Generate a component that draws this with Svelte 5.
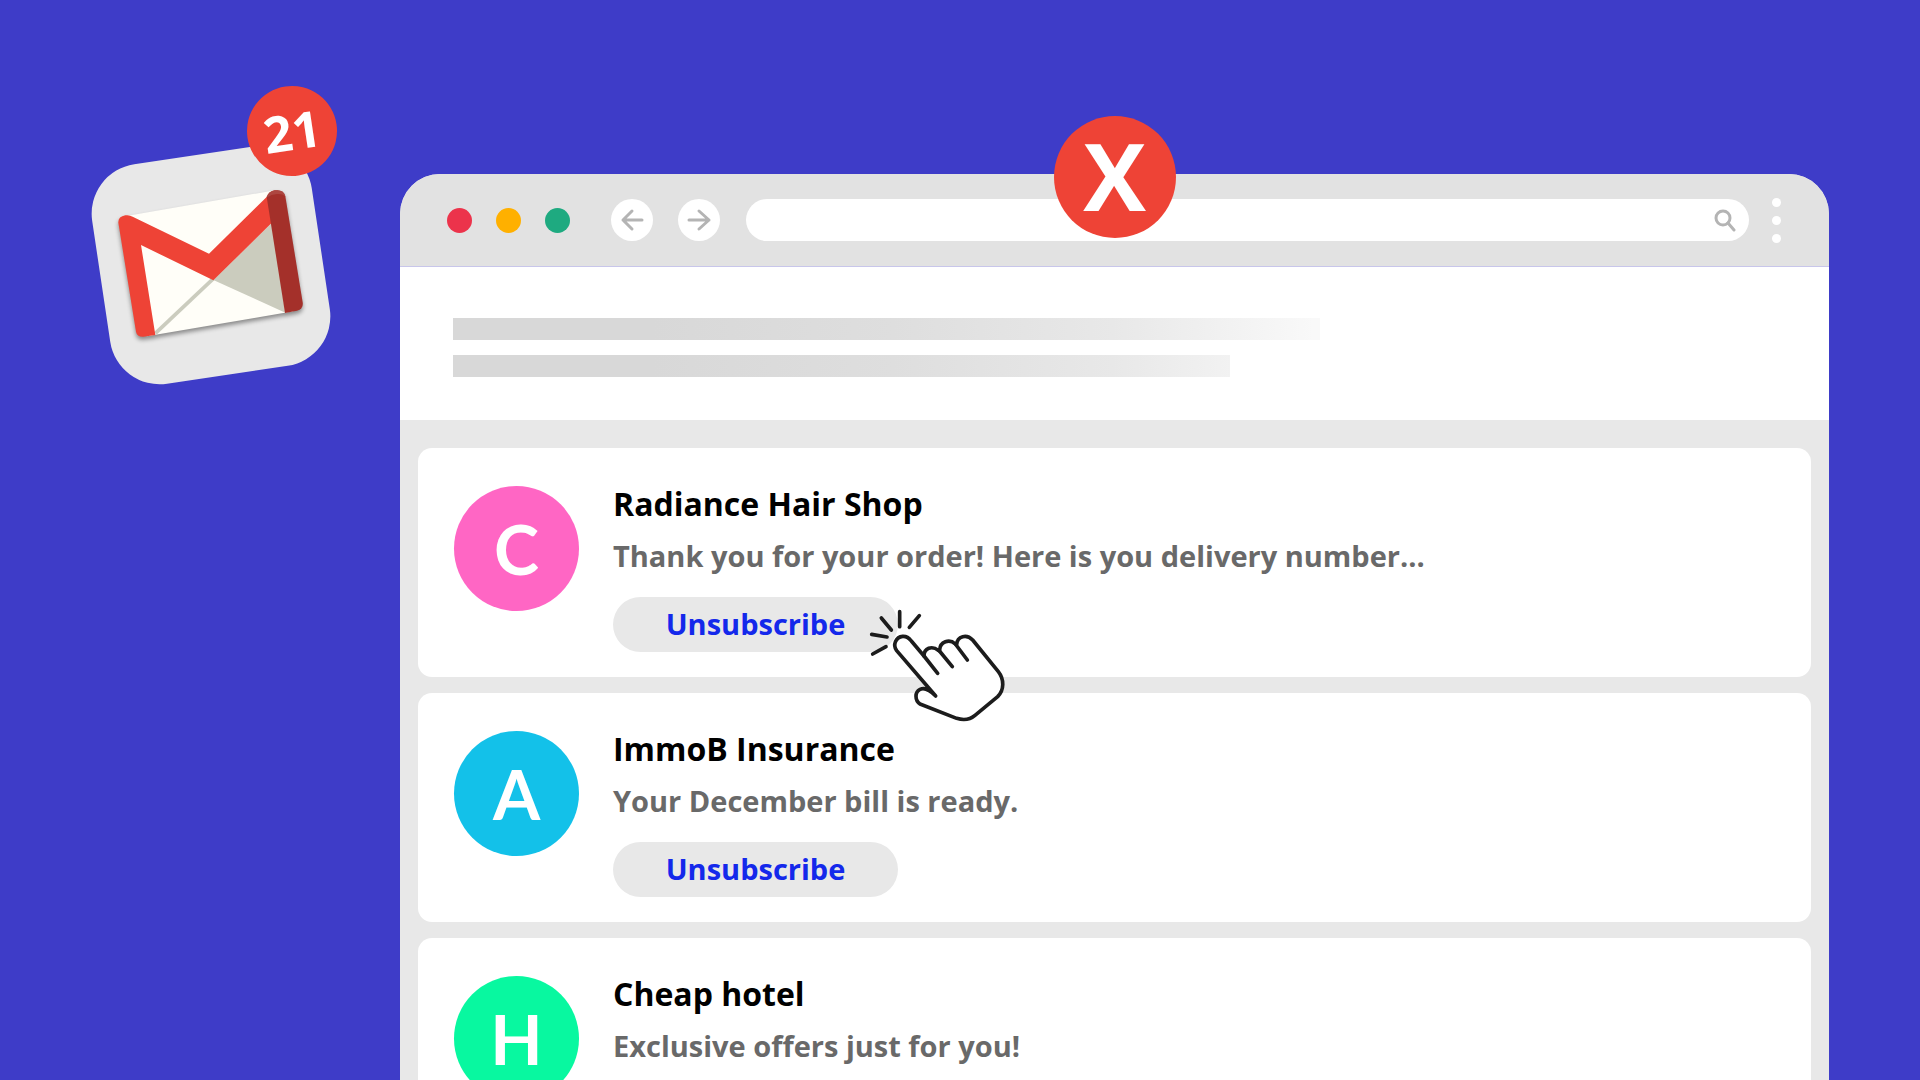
<script lang="ts">
    type Mail = { letter: string; color: string; sender: string; subject: string; newsletter: boolean };

    const mails: Mail[] = [
        { letter: "C", color: "#ff66c4", sender: "Radiance Hair Shop", subject: "Thank you for your order! Here is you delivery number...", newsletter: true },
        { letter: "A", color: "#13c1e9", sender: "ImmoB Insurance", subject: "Your December bill is ready.", newsletter: true },
        { letter: "H", color: "#08f8a0", sender: "Cheap hotel", subject: "Exclusive offers just for you!", newsletter: false },
    ];
    const lines = [65.5, 58.7];
    let unread = 21;
    let address = "";
</script>

<main class="desktop">
    <a class="app" href="#mail" aria-label="Mail">
        <span class="tile"></span>
        <svg class="envelope" viewBox="0 0 840 990" aria-hidden="true">
            <path fill="#fffef8" d="M140 438 L590 360 L640 724 L200 799 Z" />
            <path fill="#cbccbe" d="M400 630 L576 458 L616 728 Z" />
            <path stroke="#cbccbe" stroke-width="11" d="M400 626 L226 790" />
            <path fill="#ee4336" d="M115 458 Q114 440 136 436 Q148 434 158 440 L387 551 L566 375 L574 460 L400 631 L183 525 L226 795 L190 800 Q171 801 168 785 Z" />
            <path fill="#a4302a" d="M560 380 Q568 364 584 361 Q611 357 616 379 L668 697 Q671 717 651 722 L615 729 Z" />
            <path fill="#ad4640" d="M562 377 Q568 364 584 361 Q611 357 616 379 Q606 370 590 372 Q574 373 562 382 Z" />
        </svg>
        <span class="count">{unread}</span>
    </a>

    <section class="window">
        <button class="close" aria-label="Close">X</button>

        <header class="toolbar">
            <div class="lights">
                <span class="red"></span>
                <span class="yellow"></span>
                <span class="green"></span>
            </div>
            <nav>
                <button aria-label="Back">
                    <svg viewBox="0 0 42 42"><path d="M31 21 H12 M21 12 L12 21 L21 30" /></svg>
                </button>
                <button aria-label="Forward">
                    <svg viewBox="0 0 42 42"><path d="M11 21 H31 M21 12 L31 21 L21 30" /></svg>
                </button>
            </nav>
            <label class="address">
                <input type="text" aria-label="Address" bind:value={address} />
                <svg viewBox="0 0 24 24"><circle cx="10" cy="10" r="7" /><path d="M15 15 L21 22" /></svg>
            </label>
            <button class="more" aria-label="More">
                <i></i><i></i><i></i>
            </button>
        </header>

        <div class="intro">
            {#each lines as width}
                <div class="line" style="width: {width}%"></div>
            {/each}
        </div>

        <div class="list">
            {#each mails as mail, i}
                <article class="card">
                    <div class="avatar" style="background-color: {mail.color}">{mail.letter}</div>
                    <div class="body">
                        <h2>{mail.sender}</h2>
                        <p>{mail.subject}</p>
                        {#if mail.newsletter}
                            <div class="action">
                                <button class="unsubscribe">Unsubscribe</button>
                                {#if i === 0}
                                    <svg class="pointer" viewBox="0 0 570 450" aria-hidden="true">
                                        <path class="hand" d="M287 318 L170 182 C157 164 168 141 188 139 C201 138 208 145 214 153 L252 198 C252 175 275 165 296 182 L299 180 C300 155 328 145 346 162 L350 163 C352 138 380 131 398 150 L475 245 C493 268 493 300 473 320 L405 376 C390 389 370 391 350 385 L240 342 C224 331 224 306 240 298 C255 292 268 299 287 318 Z" />
                                        <path d="M252 198 L293 250 M296 180 L337 230 M346 162 L382 210" />
                                        <path d="M179 65 V110 M124 84 L154 120 M238 77 L208 112 M95 133 L141 141 M98 192 L138 170" />
                                    </svg>
                                {/if}
                            </div>
                        {/if}
                    </div>
                </article>
            {/each}
        </div>
    </section>
</main>

<style>
    :global(body) {
        background: #3e3cc8;
    }
    .desktop {
        position: relative;
        box-sizing: border-box;
        height: 100vh;
        padding: 174px 91px 0 400px;
        overflow: hidden;
        background: #3e3cc8;
        font-family: "Open Sans", "Noto Sans", sans-serif;
    }
    button {
        border: none;
        padding: 0;
        font-family: inherit;
        cursor: pointer;
    }

    /* app icon */
    .app {
        position: absolute;
        left: 80px;
        top: 70px;
        width: 280px;
        height: 330px;
        text-decoration: none;
    }
    .tile {
        position: absolute;
        left: 20px;
        top: 84px;
        width: 222px;
        height: 222px;
        border-radius: 50px;
        background: #e8e8e8;
        transform: rotate(-8.5deg);
    }
    .envelope {
        position: absolute;
        left: 0;
        top: 0;
        width: 280px;
        height: 330px;
        fill: none;
        filter: drop-shadow(0 3px 2px rgba(0, 0, 0, 0.4));
    }
    .count {
        position: absolute;
        left: 167px;
        top: 16px;
        display: flex;
        align-items: center;
        justify-content: center;
        width: 90px;
        height: 90px;
        border-radius: 50%;
        background: #ee4336;
        color: #fff;
        font-size: 50px;
        font-weight: 700;
        transform: rotate(-8.5deg);
    }

    /* browser window */
    .window {
        position: relative;
        border-radius: 40px 40px 0 0;
        background: #e8e8e8;
    }
    .close {
        position: absolute;
        left: 50%;
        top: 3px;
        width: 122px;
        height: 122px;
        padding-bottom: 4px;
        border-radius: 50%;
        background: #ee4336;
        color: #fff;
        font-size: 94px;
        font-weight: 700;
        line-height: 118px;
        transform: translate(-50%, -50%);
    }
    .toolbar {
        display: flex;
        align-items: center;
        box-sizing: border-box;
        height: 93px;
        padding: 0 48px 0 47px;
        border-radius: 40px 40px 0 0;
        border-bottom: 1px solid #c8c6ea;
        background: #e2e2e2;
    }
    .lights {
        display: flex;
        gap: 24px;
        margin-right: 41px;
    }
    .lights span {
        width: 25px;
        height: 25px;
        border-radius: 50%;
    }
    .red {
        background: #ec334b;
    }
    .yellow {
        background: #ffb000;
    }
    .green {
        background: #1eaa80;
    }
    nav {
        display: flex;
        gap: 25px;
        margin-right: 26px;
    }
    nav button {
        width: 42px;
        height: 42px;
        border-radius: 50%;
        background: #fff;
    }
    nav svg {
        display: block;
    }
    nav svg,
    .address svg {
        fill: none;
        stroke: #b4b4b4;
        stroke-width: 3;
        stroke-linecap: round;
        stroke-linejoin: round;
    }
    .address {
        display: flex;
        flex: 1;
        align-items: center;
        height: 42px;
        padding: 0 12px 0 24px;
        border-radius: 21px;
        background: #fff;
    }
    .address input {
        flex: 1;
        min-width: 0;
        border: none;
        outline: none;
        background: none;
        font-size: 20px;
    }
    .address svg {
        width: 24px;
        height: 24px;
    }
    .more {
        display: flex;
        flex-direction: column;
        gap: 9px;
        margin-left: 23px;
        background: none;
    }
    .more i {
        width: 9px;
        height: 9px;
        border-radius: 50%;
        background: #fff;
    }
    .intro {
        display: flex;
        flex-direction: column;
        gap: 15px;
        padding: 51px 53px 43px;
        background: #fff;
    }
    .line {
        height: 22px;
        background: linear-gradient(to right, #d8d8d8 200px, #dedede 440px, #e8e8e8 660px, #f9f9f9 860px);
    }

    /* mails */
    .list {
        display: flex;
        flex-direction: column;
        gap: 16px;
        padding: 28px 18px;
    }
    .card {
        display: flex;
        gap: 34px;
        padding: 38px 36px 25px;
        border-radius: 14px;
        background: #fff;
    }
    .avatar {
        flex: none;
        width: 125px;
        height: 125px;
        border-radius: 50%;
        color: #fff;
        font-family: Lato, sans-serif;
        font-size: 68px;
        font-weight: 700;
        line-height: 125px;
        text-align: center;
    }
    h2 {
        margin: 0 0 16px;
        color: #000;
        font-size: 32px;
        font-weight: 700;
        line-height: 36px;
    }
    p {
        margin: 0 0 23px;
        color: #696969;
        font-size: 29px;
        font-weight: 700;
        line-height: 36px;
    }
    .action {
        position: relative;
        width: 285px;
    }
    .unsubscribe {
        display: block;
        width: 100%;
        height: 55px;
        padding-bottom: 2px;
        border-radius: 28px;
        background: #e8e8e8;
        color: #1428eb;
        font-size: 29px;
        font-weight: 700;
    }
    .pointer {
        position: absolute;
        left: 227px;
        top: -7px;
        z-index: 1;
        width: 190px;
        height: 150px;
        fill: none;
        stroke: #1c1c1c;
        stroke-width: 11;
        stroke-linecap: round;
        stroke-linejoin: round;
        pointer-events: none;
    }
    .hand {
        fill: #fff;
    }
</style>
